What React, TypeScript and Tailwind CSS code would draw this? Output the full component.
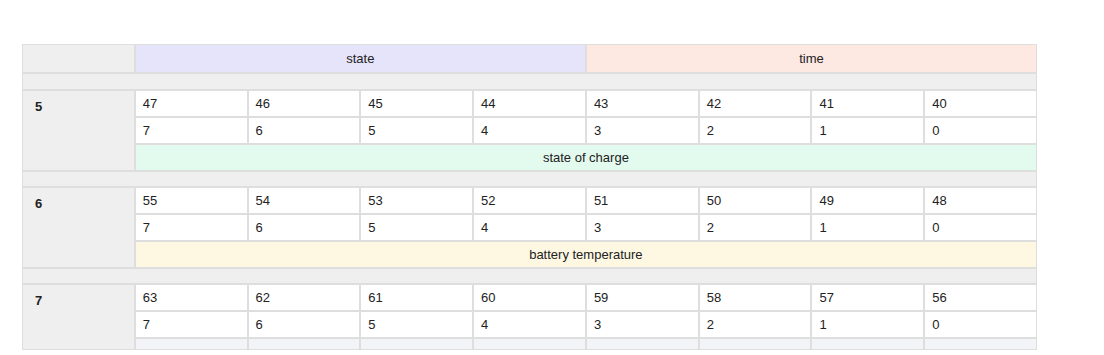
import React from "react";

const blocks = [
  { label: "5", start: 47, name: "state of charge", bg: "bg-[#e3faee]", sep: "h-[15px]" },
  { label: "6", start: 55, name: "battery temperature", bg: "bg-[#fef8e2]", sep: "h-[14px]" },
  { label: "7", start: 63, name: "", bg: "bg-[#f2f4f7]", sep: "h-[14px]" },
];

export default function App() {
  return (
    <div className="w-[1104px] h-[355px] overflow-hidden bg-white pt-[44px] pl-[22px]" style={{ fontFamily: '"Liberation Sans", Arial, sans-serif' }}>
      <div className="w-[1015px] grid grid-cols-9 gap-[2px] bg-[#dedede] p-[1px] text-[13px] text-[#222]">
        <div className="bg-[#efefef] h-[27px]" />
        <div className="col-span-4 bg-[#e6e4fb] h-[27px] flex items-center justify-center">state</div>
        <div className="col-span-4 bg-[#fde8e2] h-[27px] flex items-center justify-center">time</div>
        {blocks.map((b) => (
          <React.Fragment key={b.label}>
            <div className={`col-span-9 bg-[#efefef] ${b.sep}`} />
            <div className="row-span-3 bg-[#efefef] font-bold pl-[12px] pt-[6px]">{b.label}</div>
            {Array.from({ length: 8 }, (_, i) => (
              <div key={"h" + i} className="bg-white h-[25px] flex items-center pl-[7px]">{b.start - i}</div>
            ))}
            {Array.from({ length: 8 }, (_, i) => (
              <div key={"l" + i} className="bg-white h-[25px] flex items-center pl-[7px]">{7 - i}</div>
            ))}
            {b.name ? (
              <div className={`col-span-8 ${b.bg} h-[25px] flex items-center justify-center`}>{b.name}</div>
            ) : (
              Array.from({ length: 8 }, (_, i) => (
                <div key={"e" + i} className={`${b.bg} h-[10px]`} />
              ))
            )}
          </React.Fragment>
        ))}
      </div>
    </div>
  );
}
